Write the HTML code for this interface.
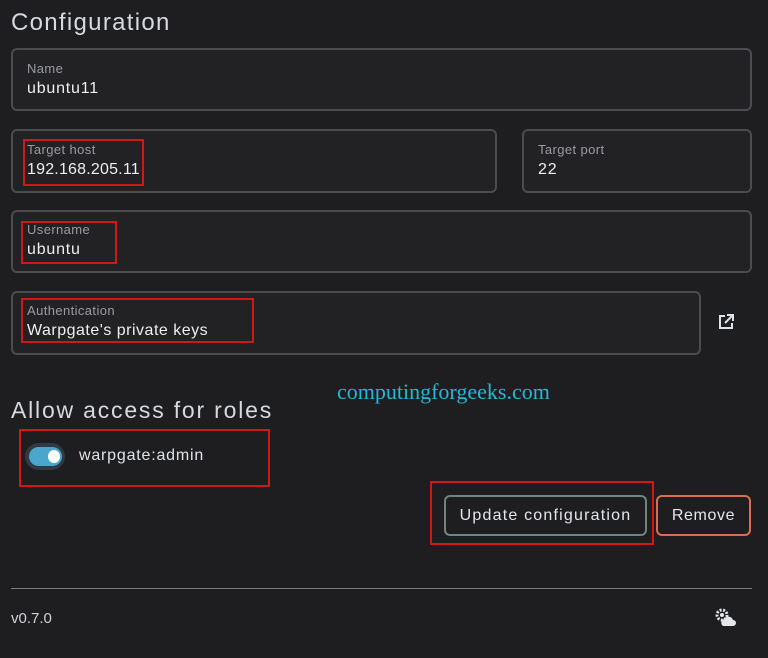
<!DOCTYPE html><html><head><style>
body{margin:0;width:768px;height:658px;background:#1e1e20;font-family:"Liberation Sans",sans-serif;color:#e4e6ea;position:relative;overflow:hidden}
.a{position:absolute}
.box{position:absolute;border:2px solid #4a4c50;border-radius:6px;box-sizing:border-box;background:#222225}
.lbl{position:absolute;font-size:13px;color:#9a9ca2;letter-spacing:0.4px}
.val{position:absolute;font-size:16px;color:#eceef0;letter-spacing:0.8px}
.red{position:absolute;border:2px solid #d01818;box-sizing:border-box}
</style></head><body>
<div class="a" style="left:11px;top:9px;font-size:24px;color:#d6d9de;letter-spacing:1.3px">Configuration</div>
<div class="box" style="left:11px;top:48px;width:741px;height:63px"></div>
<div class="lbl" style="left:27px;top:61px">Name</div><div class="val" style="left:27px;top:80px">ubuntu11</div>
<div class="box" style="left:11px;top:129px;width:486px;height:64px"></div>
<div class="lbl" style="left:27px;top:142px">Target host</div><div class="val" style="left:27px;top:161px;letter-spacing:0.2px">192.168.205.11</div>
<div class="red" style="left:23px;top:139px;width:121px;height:47px"></div>
<div class="box" style="left:522px;top:129px;width:230px;height:64px"></div>
<div class="lbl" style="left:538px;top:142px">Target port</div><div class="val" style="left:538px;top:161px">22</div>
<div class="box" style="left:11px;top:210px;width:741px;height:63px"></div>
<div class="lbl" style="left:27px;top:222px">Username</div><div class="val" style="left:27px;top:241px">ubuntu</div>
<div class="red" style="left:21px;top:221px;width:96px;height:43px"></div>
<div class="box" style="left:11px;top:291px;width:690px;height:64px"></div>
<div class="lbl" style="left:27px;top:303px">Authentication</div><div class="val" style="left:27px;top:322px;letter-spacing:0.5px">Warpgate's private keys</div>
<div class="red" style="left:21px;top:298px;width:233px;height:45px"></div>
<svg class="a" style="left:717px;top:313px" width="18" height="18" viewBox="0 0 18 18" fill="none" stroke="#dfe2e6" stroke-width="2"><path d="M8 3H3v12h12v-5"/><path d="M10 2h6v6M16 2L8 10"/></svg>
<div class="a" style="left:337px;top:379px;font-family:'Liberation Serif',serif;font-size:22px;color:#22b8d8">computingforgeeks.com</div>
<div class="a" style="left:11px;top:397px;font-size:23px;color:#d6d9de;letter-spacing:1.8px">Allow access for roles</div>
<div class="red" style="left:19px;top:429px;width:251px;height:58px"></div>
<div class="a" style="left:25px;top:443px;width:40px;height:27px;border-radius:14px;background:#2e3a44"></div>
<div class="a" style="left:29px;top:447px;width:33px;height:19px;border-radius:10px;background:#4aa6cc"></div>
<div class="a" style="left:48px;top:450px;width:12px;height:13px;border-radius:50%;background:#fff"></div>
<div class="a" style="left:79px;top:447px;font-size:16px;color:#dfe2e6;letter-spacing:0.8px">warpgate:admin</div>
<div class="red" style="left:430px;top:481px;width:224px;height:64px"></div>
<div class="a" style="left:444px;top:495px;width:203px;height:41px;border:2px solid #70857e;border-radius:6px;box-sizing:border-box;font-size:16px;line-height:37px;text-align:center;color:#e4e6ea;letter-spacing:1.2px">Update configuration</div>
<div class="a" style="left:656px;top:495px;width:95px;height:41px;border:2px solid #d8704e;border-radius:6px;box-sizing:border-box;font-size:16px;line-height:37px;text-align:center;color:#e4e6ea;letter-spacing:0.6px">Remove</div>
<div class="a" style="left:11px;top:588px;width:741px;height:1px;background:#7a7c80"></div>
<div class="a" style="left:11px;top:610px;font-size:15px;color:#cfd2d6">v0.7.0</div>
<svg class="a" style="left:714px;top:607px" width="24" height="22" viewBox="0 0 24 22"><circle cx="8" cy="8" r="5" fill="none" stroke="#e4e6ea" stroke-width="3" stroke-dasharray="2 1.5"/><circle cx="8" cy="8" r="2" fill="#e4e6ea"/><path d="M9 19a4 4 0 0 1 1-7 5 5 0 0 1 9 1 3 3 0 0 1 0 6z" fill="#e4e6ea"/></svg>
</body></html>
